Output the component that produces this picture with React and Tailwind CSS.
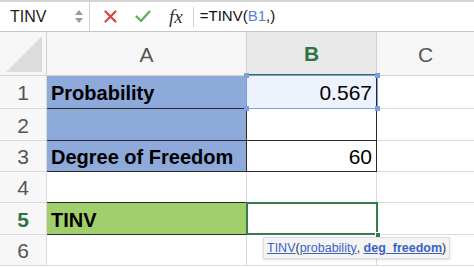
import React from "react";

const font = { fontFamily: '"Liberation Sans", Arial, sans-serif' };

const rows = [
  { n: "1", h: "h-[33px]", a: "Probability", b: "0.567", aCls: "bg-[#8eaadb] border-b-[#2a2a2a] border-r-[#2a2a2a]", bCls: "bg-[#edf2fc] border-b-[#2a2a2a] border-r-[#2a2a2a]" },
  { n: "2", h: "h-[32px]", a: "", b: "", aCls: "bg-[#8eaadb] border-b-[#2a2a2a] border-r-[#2a2a2a]", bCls: "bg-white border-b-[#2a2a2a] border-r-[#2a2a2a]" },
  { n: "3", h: "h-[31px]", a: "Degree of Freedom", b: "60", aCls: "bg-[#8eaadb] border-b-[#2a2a2a] border-r-[#2a2a2a]", bCls: "bg-white border-b-[#2a2a2a] border-r-[#2a2a2a]" },
  { n: "4", h: "h-[31px]", a: "", b: "", aCls: "bg-white border-b-[#2a2a2a] border-r-[#dadada]", bCls: "bg-white border-b-[#dadada] border-r-[#dadada]" },
  { n: "5", h: "h-[32px]", a: "TINV", b: "", aCls: "bg-[#a0cf6c] border-b-[#2a2a2a] border-r-[#2a2a2a]", bCls: "bg-white border-b-[#dadada] border-r-[#dadada]", active: true },
  { n: "6", h: "h-[31px]", a: "", b: "", aCls: "bg-white border-b-[#dadada] border-r-[#dadada]", bCls: "bg-white border-b-[#dadada] border-r-[#dadada]" },
];

const Handle = ({ className }) => (
  <div className={`absolute w-[5px] h-[5px] ${className}`} />
);

export default function App() {
  return (
    <div className="relative w-[474px] h-[268px] overflow-hidden bg-white" style={font}>
      {/* formula bar */}
      <div className="flex items-center h-[32px] border-t-2 border-t-[#d4d4d4] border-b border-b-[#c6c6c6] bg-white">
        <div className="flex items-center justify-between w-[90px] h-full pl-[10px] pr-[6px] border-r border-r-[#d0d0d0]">
          <span className="text-[16px] font-medium text-[#222]">TINV</span>
          <div className="flex flex-col gap-[3px]">
            <svg width="8" height="5" viewBox="0 0 8 5"><path d="M0 5 L4 0 L8 5 Z" fill="#9a9a9a" /></svg>
            <svg width="8" height="5" viewBox="0 0 8 5"><path d="M0 0 L4 5 L8 0 Z" fill="#9a9a9a" /></svg>
          </div>
        </div>
        <div className="flex items-center h-full pl-[14px] gap-[18px]">
          <svg width="13" height="13" viewBox="0 0 13 13">
            <path d="M1.5 1.5 L11.5 11.5 M11.5 1.5 L1.5 11.5" stroke="#d9433e" strokeWidth="2.2" strokeLinecap="round" />
          </svg>
          <svg width="16" height="13" viewBox="0 0 16 13">
            <path d="M1.5 6.5 L6 11 L14.5 1.5" stroke="#5cae55" strokeWidth="2.2" fill="none" strokeLinecap="round" strokeLinejoin="round" />
          </svg>
          <span className="text-[19px] italic text-[#333] leading-none" style={{ fontFamily: '"Liberation Serif", serif' }}>fx</span>
        </div>
        <div className="h-[20px] ml-[10px] border-l border-l-[#d0d0d0]" />
        <div className="pl-[6px] text-[15px] text-[#111]">
          =TINV(<span className="text-[#5a7fd6]">B1</span>,)
        </div>
      </div>

      {/* grid */}
      <div className="grid grid-cols-[47px_200px_130px_97px]">
        {/* header row */}
        <div className="h-[44px] bg-[#f6f6f6] border-r border-b border-[#d2d2d2] flex items-end justify-end pr-[4px] pb-[3px]">
          <svg width="36" height="36" viewBox="0 0 36 36"><path d="M36 0 L36 36 L0 36 Z" fill="#dcdcdc" /></svg>
        </div>
        <div className="h-[44px] bg-[#f6f6f6] border-r border-b border-[#d2d2d2] flex items-center justify-center pt-[2px] text-[21px] text-[#555]">A</div>
        <div className="h-[44px] bg-[#e9e9e9] border-r border-r-[#d2d2d2] border-b-2 border-b-[#2f7346] flex items-center justify-center pt-[2px] text-[21px] font-bold text-[#2f7346]">B</div>
        <div className="h-[44px] bg-[#f6f6f6] border-b border-[#d2d2d2] flex items-center justify-center pt-[2px] text-[21px] text-[#555]">C</div>

        {rows.map((r) => (
          <React.Fragment key={r.n}>
            <div className={`${r.h} bg-[#f7f7f7] border-r border-b border-[#dadada] flex items-center justify-center pt-[2px] text-[21px] ${r.active ? "font-bold text-[#2f7346]" : "text-[#555]"}`}>
              {r.n}
            </div>
            <div className={`${r.h} border-r border-b ${r.aCls} flex items-center pl-[4px] pt-[2px] text-[20px] font-bold text-black`}>
              {r.a}
            </div>
            <div className={`${r.h} border-r border-b ${r.bCls} flex items-center justify-end pr-[4px] pt-[2px] text-[21px] text-black`}>
              {r.b}
            </div>
            <div className={`${r.h} border-b border-[#dadada] bg-white`} />
          </React.Fragment>
        ))}
      </div>

      {/* B1 selection */}
      <div className="absolute left-[246px] top-[75px] w-[132px] h-[34px] border-[1.5px] border-[#7e9ee2]" />
      <Handle className="left-[244px] top-[73px] bg-[#7e9ee2]" />
      <Handle className="left-[375px] top-[73px] bg-[#7e9ee2]" />
      <Handle className="left-[244px] top-[106px] bg-[#7e9ee2]" />
      <Handle className="left-[375px] top-[106px] bg-[#7e9ee2]" />

      {/* B5 active cell */}
      <div className="absolute left-[246px] top-[202px] w-[132px] h-[33px] border-2 border-[#3a7a4b]" />
      <Handle className="left-[375px] top-[232px] w-[6px] h-[6px] bg-[#3a7a4b] border border-white" />

      {/* tooltip */}
      <div className="absolute left-[263px] top-[237px] h-[22px] px-[3px] flex items-center bg-[#f4f4f4] border border-[#dcdcdc] shadow-sm text-[12.5px] text-[#333]">
        <span className="text-[#3b64c4] underline">TINV</span>(
        <span className="text-[#3b64c4] underline">probability</span>,&nbsp;
        <span className="text-[#3b64c4] underline font-bold">deg_freedom</span>)
      </div>
    </div>
  );
}
